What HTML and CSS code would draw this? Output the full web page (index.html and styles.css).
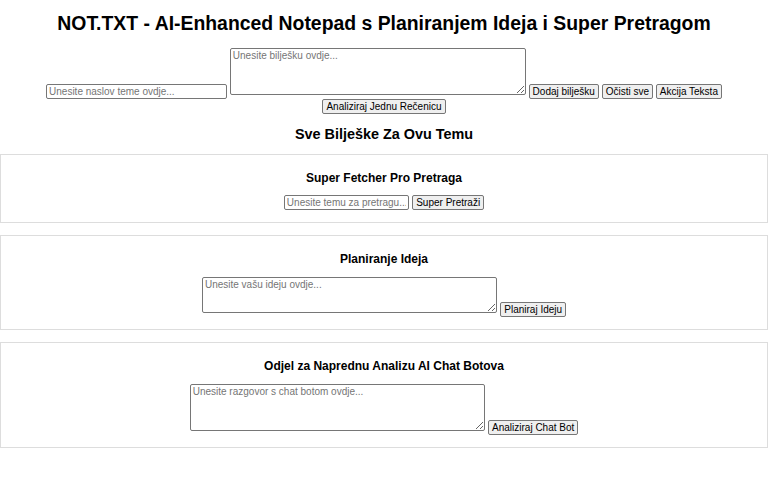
FILE: index.html
```html
<!DOCTYPE html>
<html lang="hr">
<head>
  <meta charset="UTF-8" />
  <meta name="viewport" content="width=device-width, initial-scale=1.0" />
  <title>NOT.TXT</title>
  <link rel="stylesheet" href="styles.css">
</head>
<body>
  <h1>NOT.TXT - AI-Enhanced Notepad s Planiranjem Ideja i Super Pretragom</h1>

  <div class="editor">
    <input type="text" id="topic-title" class="title-input" placeholder="Unesite naslov teme ovdje..." />
    <textarea id="note-text" class="note-area" placeholder="Unesite bilješku ovdje..."></textarea>
    <button>Dodaj bilješku</button>
    <button>Očisti sve</button>
    <button>Akcija Teksta</button>
    <button>Analiziraj Jednu Rečenicu</button>
  </div>

  <h2>Sve Bilješke Za Ovu Temu</h2>
  <div id="notes"></div>

  <section class="panel">
    <h3>Super Fetcher Pro Pretraga</h3>
    <input type="text" class="search-input" placeholder="Unesite temu za pretragu..." />
    <button>Super Pretraži</button>
  </section>

  <section class="panel">
    <h3>Planiranje Ideja</h3>
    <textarea class="idea-area" placeholder="Unesite vašu ideju ovdje..."></textarea>
    <button>Planiraj Ideju</button>
  </section>

  <section class="panel">
    <h3>Odjel za Naprednu Analizu AI Chat Botova</h3>
    <textarea class="chat-area" placeholder="Unesite razgovor s chat botom ovdje..."></textarea>
    <button>Analiziraj Chat Bot</button>
  </section>
</body>
</html>
```

FILE: styles.css
```css
body {
  font-family: "Liberation Sans", Arial, sans-serif;
  margin: 0;
  background: #fff;
  color: #000;
  font-size: 12px;
}
h1 {
  font-size: 19.4px;
  text-align: center;
  margin: 12px 0 13px;
}
h2 {
  font-size: 14.4px;
  text-align: center;
  margin: 12px 0 12px;
}
h3 {
  font-size: 12px;
  margin: 16px 0 10px;
}
.editor {
  text-align: center;
  font-size: 10px;
}
input, textarea, button {
  font-family: "Liberation Sans", Arial, sans-serif;
  font-size: 10px;
  margin: 0;
}
input {
  box-sizing: border-box;
  height: 15px;
  padding: 0 2px;
  border: 1px solid #767676;
  border-radius: 2px;
}
textarea {
  box-sizing: border-box;
  padding: 1px 2px;
  border: 1px solid #767676;
  border-radius: 2px;
  resize: vertical;
}
button {
  box-sizing: border-box;
  height: 15px;
  padding: 0 3px;
  background: #efefef;
  border: 1px solid #767676;
  border-radius: 2px;
}
.title-input {
  width: 181px;
}
.note-area {
  width: 296px;
  height: 47px;
}
.search-input {
  width: 125px;
}
.idea-area {
  width: 295px;
  height: 36px;
  margin-top: 1px;
}
.chat-area {
  width: 295px;
  height: 47px;
  margin-top: 1px;
}
.panel {
  border: 1px solid #ddd;
  text-align: center;
  padding: 0 0 12px;
  margin-bottom: 12px;
}
```
